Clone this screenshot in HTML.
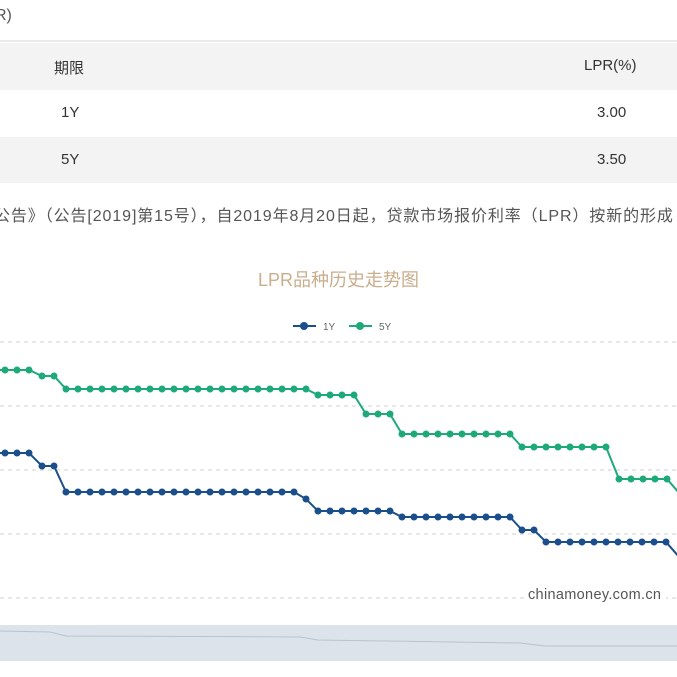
<!DOCTYPE html>
<html><head><meta charset="utf-8">
<style>
html,body{margin:0;padding:0;width:677px;height:677px;overflow:hidden;background:#fff;font-family:"Liberation Sans","Noto Sans CJK SC",sans-serif;color:#333;}
.abs{position:absolute;white-space:nowrap;}
</style></head><body>
<div class="abs" style="left:-5px;top:7px;font-size:16px;color:#555;">R)</div>
<div class="abs" style="left:0;top:40px;width:677px;height:2px;background:#eaeaea;"></div>
<div class="abs" style="left:0;top:43px;width:677px;height:47px;background:#f3f3f3;"></div>
<div class="abs" style="left:0;top:137px;width:677px;height:46px;background:#f3f3f3;"></div>
<div class="abs" style="left:54px;top:57px;font-size:15px;">期限</div>
<div class="abs" style="left:584px;top:57px;font-size:15px;">LPR(%)</div>
<div class="abs" style="left:61px;top:104px;font-size:15px;">1Y</div>
<div class="abs" style="left:597px;top:104px;font-size:15px;">3.00</div>
<div class="abs" style="left:61px;top:151px;font-size:15px;">5Y</div>
<div class="abs" style="left:597px;top:151px;font-size:15px;">3.50</div>
<div class="abs" style="left:-6px;top:202px;font-size:16px;letter-spacing:0.9px;color:#555;">公告》（公告[2019]第15号），自2019年8月20日起，贷款市场报价利率（LPR）按新的形成</div>
<div class="abs" style="left:258px;top:266px;font-size:18px;color:#c9ae8c;">LPR品种历史走势图</div>
<svg class="abs" style="left:0;top:0" width="677" height="677" id="s">
<g stroke="#cfcfcf" stroke-dasharray="4,4" stroke-width="1">
<line x1="0" y1="342" x2="677" y2="342"/><line x1="0" y1="406" x2="677" y2="406"/><line x1="0" y1="470" x2="677" y2="470"/><line x1="0" y1="534" x2="677" y2="534"/><line x1="0" y1="598" x2="677" y2="598"/>
</g>
<rect x="0" y="625" width="677" height="36" fill="#dde3ea"/>
<polyline points="0,631 50,632 66,636 300,637 318,640 520,643 545,646 677,646" fill="none" stroke="#b8c3cf"/>
<line x1="293" y1="326" x2="316" y2="326" stroke="#1a4f8b" stroke-width="2"/><circle cx="304" cy="326" r="4" fill="#1a4f8b"/>
<text x="323" y="330" font-size="10" fill="#666" font-family="Liberation Sans">1Y</text>
<line x1="349" y1="326" x2="372" y2="326" stroke="#1eaa78" stroke-width="2"/><circle cx="360" cy="326" r="4" fill="#1eaa78"/>
<text x="379" y="330" font-size="10" fill="#666" font-family="Liberation Sans">5Y</text>
<rect x="526" y="584" width="140" height="20" fill="#fff"/>
<text x="528" y="599" font-size="14.5" fill="#555" font-family="Liberation Sans" textLength="133">chinamoney.com.cn</text>
</svg>
<script>
function build(spec,color,last){
 var pts=[[-8,spec[0][1]]];
 spec.forEach(function(s){for(var i=0;i<s[2];i++)pts.push([s[0]+i*12,s[1]]);});
 var svg=document.getElementById('s');var ns='http://www.w3.org/2000/svg';
 var all=pts.concat([last]);
 var pl=document.createElementNS(ns,'polyline');
 pl.setAttribute('points',all.map(function(p){return p.join(',')}).join(' '));
 pl.setAttribute('fill','none');pl.setAttribute('stroke',color);pl.setAttribute('stroke-width','2');
 svg.appendChild(pl);
 pts.slice(1).forEach(function(p){var c=document.createElementNS(ns,'circle');c.setAttribute('cx',p[0]);c.setAttribute('cy',p[1]);c.setAttribute('r','3.5');c.setAttribute('fill',color);svg.appendChild(c);});
}
build([[5,370,3],[42,376,2],[66,389,21],[318,395,4],[366,414,3],[402,434,10],[522,447,8],[619,479,5]],'#1eaa78',[680,494]);
build([[5,453,3],[42,466,2],[66,492,20],[306,499,1],[318,511,7],[402,517,10],[522,530,2],[546,542,11]],'#1a4f8b',[680,558]);
</script>
</body></html>
